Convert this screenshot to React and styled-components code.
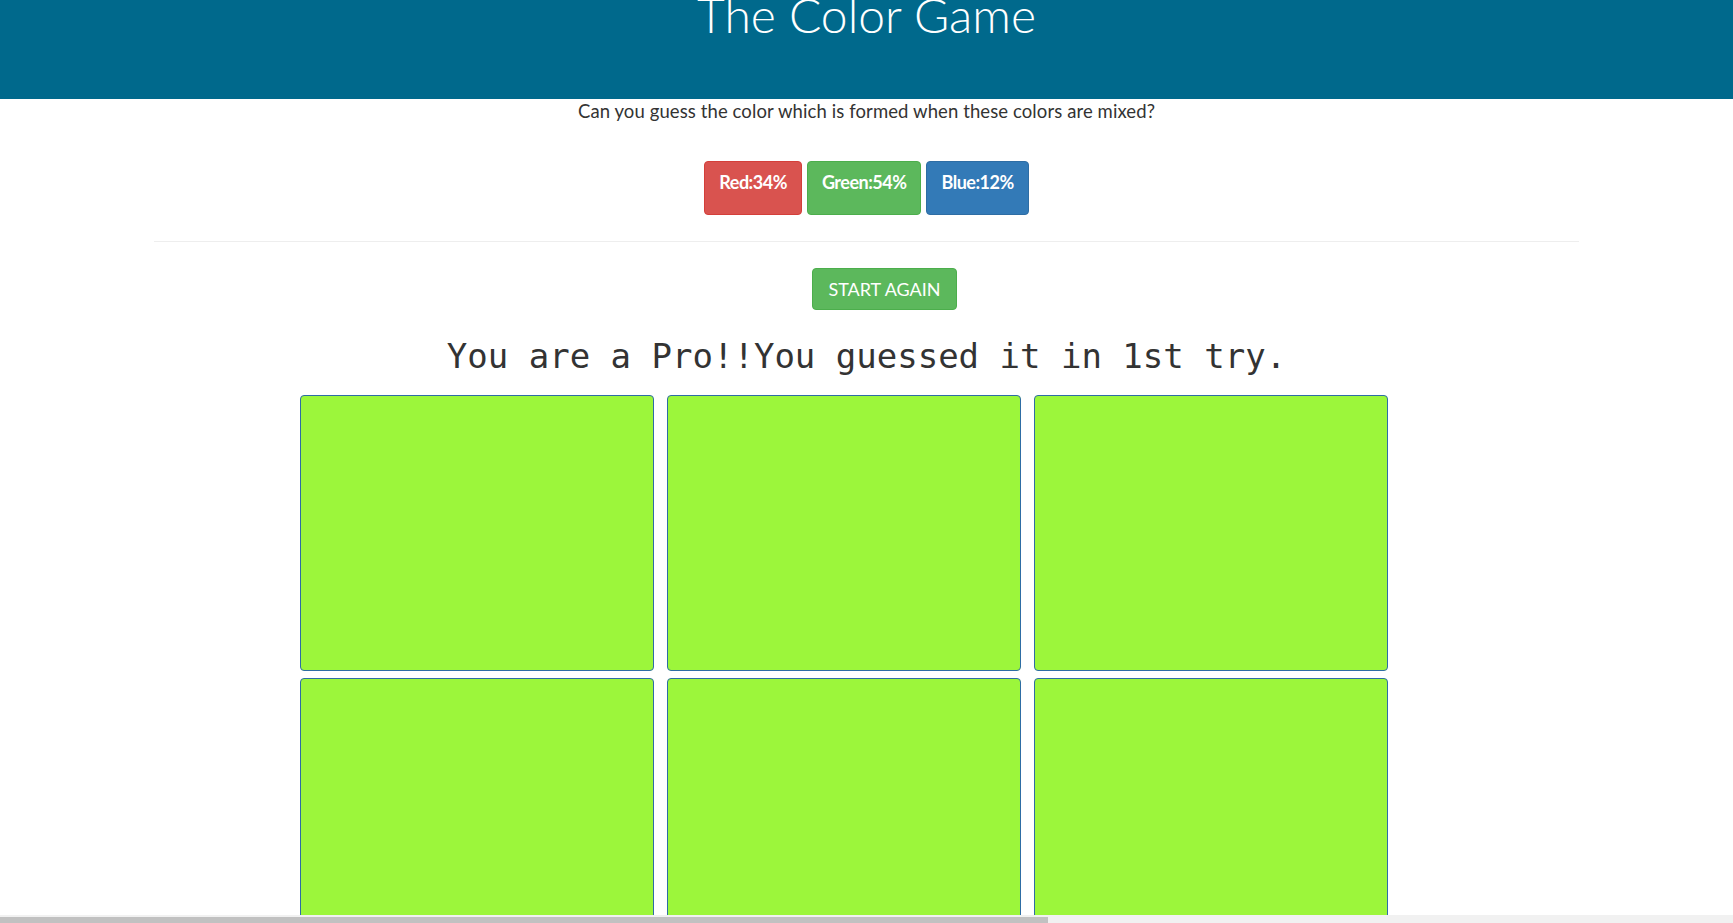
import React from 'react'
import styled, { createGlobalStyle } from 'styled-components'

const GlobalStyle = createGlobalStyle`
  html {
    overflow: hidden;
  }
  body {
    margin: 0;
    font-family: Lato, 'Open Sans', sans-serif;
    color: #333;
    background: #fff;
  }
`

const Header = styled.header`
  height: 99px;
  background: #00698c;
  display: flex;
  flex-direction: column;
  align-items: center;
`

const Title = styled.h1`
  margin: -9px 0 0;
  font-size: 48px;
  line-height: 1;
  font-weight: 300;
  color: #fff;
`

const Question = styled.p`
  margin: 1px 0 0;
  text-align: center;
  font-size: 18.5px;
  line-height: 1.2;
  letter-spacing: 0.1px;
`

const ColorRow = styled.div`
  display: flex;
  justify-content: center;
  gap: 5px;
  margin-top: 39px;
`

const ColorTag = styled.div`
  padding: 10px 14px 22px;
  border-radius: 4px;
  border: 1px solid ${p => p.$border};
  background: ${p => p.$bg};
  color: #fff;
  font-size: 18px;
  line-height: 20px;
  font-weight: 700;
  letter-spacing: -0.5px;
`

const Divider = styled.hr`
  width: 1425px;
  margin: 26px auto 0;
  border: 0;
  border-top: 1px solid #eee;
`

const Controls = styled.div`
  display: flex;
  justify-content: center;
  margin-top: 26px;
`

const ResetButton = styled.button`
  margin-left: 36px;
  padding: 10px 15px;
  border: 1px solid #4cae4c;
  border-radius: 4px;
  background: #5cb85c;
  color: #fff;
  font-family: inherit;
  font-size: 18px;
  line-height: 20px;
  text-transform: uppercase;
  cursor: pointer;
`

const Message = styled.h2`
  margin: 26px 0 0;
  text-align: center;
  font-family: 'DejaVu Sans Mono', monospace;
  font-size: 34px;
  font-weight: 400;
  line-height: normal;
  color: #333;
`

const Board = styled.div`
  width: 1170px;
  margin: 19px auto 0;
  padding-left: 18px;
  box-sizing: border-box;
  display: grid;
  grid-template-columns: repeat(3, 354px);
  column-gap: 13px;
  row-gap: 7px;
`

const Square = styled.div`
  height: 276px;
  box-sizing: border-box;
  border: 1px solid #2e6da4;
  border-radius: 4px;
  background: ${p => p.$color};
`

// horizontal scrollbar pinned to the bottom of the window
const ScrollTrack = styled.div`
  position: fixed;
  left: 0;
  right: 0;
  bottom: 0;
  height: 8px;
  background: #f1f1f1;
`

const ScrollThumb = styled.div`
  margin-top: 2px;
  width: ${p => p.$width}px;
  height: 6px;
  background: #c1c1c1;
`

const mix = [
  { label: 'Red', value: 34, bg: '#d9534f', border: '#d43f3a' },
  { label: 'Green', value: 54, bg: '#5cb85c', border: '#4cae4c' },
  { label: 'Blue', value: 12, bg: '#337ab7', border: '#2e6da4' }
]

const squares = Array.from({ length: 6 }, () => '#9cf63b')

export default function App() {
  return (
    <>
      <GlobalStyle />
      <Header>
        <Title>The Color Game</Title>
      </Header>
      <Question>Can you guess the color which is formed when these colors are mixed?</Question>
      <ColorRow>
        {mix.map(c => (
          <ColorTag key={c.label} $bg={c.bg} $border={c.border}>
            {c.label}:{c.value}%
          </ColorTag>
        ))}
      </ColorRow>
      <Divider />
      <Controls>
        <ResetButton>Start Again</ResetButton>
      </Controls>
      <Message>You are a Pro!!You guessed it in 1st try.</Message>
      <Board>
        {squares.map((color, i) => (
          <Square key={i} $color={color} />
        ))}
      </Board>
      <ScrollTrack>
        <ScrollThumb $width={1048} />
      </ScrollTrack>
    </>
  )
}
